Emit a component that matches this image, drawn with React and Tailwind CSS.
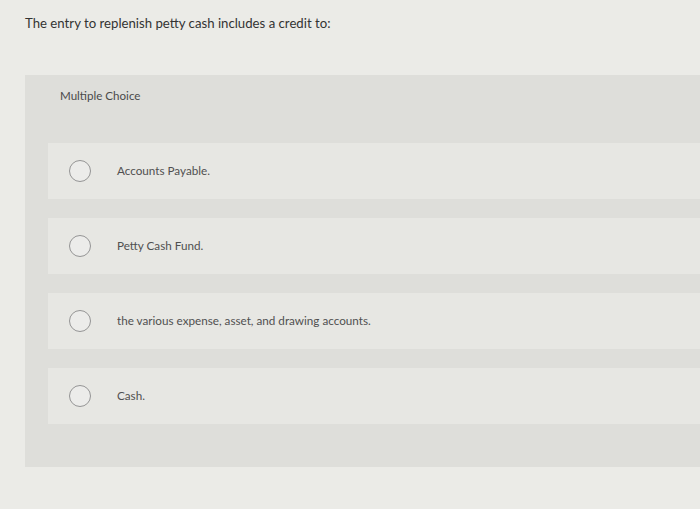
import React from "react";

const options = [
  "Accounts Payable.",
  "Petty Cash Fund.",
  "the various expense, asset, and drawing accounts.",
  "Cash.",
];

const App = () => {
  return (
    <div
      className="w-[700px] h-[509px] overflow-hidden bg-[#ebebe7] text-[#3a3a3a]"
      style={{ fontFamily: "Lato, 'Open Sans', sans-serif" }}
    >
      {/* Question */}
      <div className="pl-[25px] pt-[14px] h-[75px]">
        <p className="text-[13.2px] leading-[18px] text-[#333]">
          The entry to replenish petty cash includes a credit to:
        </p>
      </div>

      {/* Answer panel */}
      <div className="ml-[25px] h-[392px] bg-[#dededa] pt-[14px]">
        <p className="pl-[35px] text-[11.6px] leading-[14px] text-[#4a4a4a]">
          Multiple Choice
        </p>

        <div className="mt-[40px] flex flex-col gap-[19px]">
          {options.map((o) => (
            <div
              key={o}
              className="ml-[23px] h-[56px] bg-[#e7e7e3] flex items-center"
            >
              <span className="ml-[21px] w-[22px] h-[22px] rounded-full border border-[#959595] bg-[#ececea]" />
              <span className="ml-[26px] text-[11.7px] text-[#505050]">{o}</span>
            </div>
          ))}
        </div>
      </div>
    </div>
  );
};

export default App;
